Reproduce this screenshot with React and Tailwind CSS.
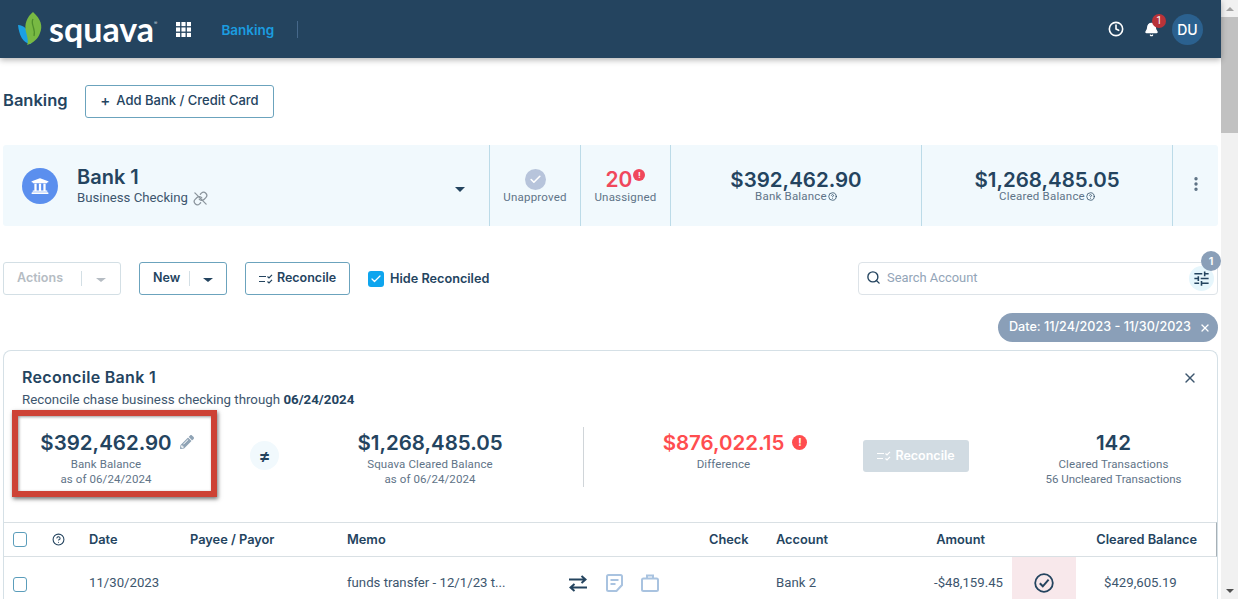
import React from "react";
import { Clock, Bell, EllipsisVertical, Search, X, CircleHelp, Check } from "lucide-react";
import { FaUniversity, FaPencilAlt } from "react-icons/fa";
import { MdTune } from "react-icons/md";

const Logo = () => (
  <svg width="26" height="34" viewBox="0 0 26 34" className="shrink-0">
    <path d="M0 13 C6 13 11 18 13 28 C14 31 13 32 12 32 C5 31 1 23 0 13Z" fill="#1ba0e2" />
    <path d="M15 0 C23 7 25 14 22 21 C20 27 15 31 9 33 C11 30 9 24 8 20 C6 12 9 5 15 0Z" fill="#78b943" />
    <path d="M15 7 C12 12 18 16 16 24" stroke="#4f8f2c" strokeWidth="1.3" fill="none" />
  </svg>
);

const GridIcon = () => (
  <svg width="15" height="15" viewBox="0 0 16 16" fill="#ffffff" className="shrink-0">
    <rect x="0" y="0" width="4.4" height="4.4" /><rect x="5.8" y="0" width="4.4" height="4.4" /><rect x="11.6" y="0" width="4.4" height="4.4" />
    <rect x="0" y="5.8" width="4.4" height="4.4" /><rect x="5.8" y="5.8" width="4.4" height="4.4" /><rect x="11.6" y="5.8" width="4.4" height="4.4" />
    <rect x="0" y="11.6" width="4.4" height="4.4" /><rect x="5.8" y="11.6" width="4.4" height="4.4" /><rect x="11.6" y="11.6" width="4.4" height="4.4" />
  </svg>
);

const ReconcileIcon = ({ color = "#24445f" }) => (
  <svg width="14" height="10" viewBox="0 0 14 10" fill="none" stroke={color} strokeWidth="1.2" className="shrink-0">
    <path d="M0 2.5H7M0 7.5H6" />
    <path d="M8.5 2.5L10 4L13 0.8M8.5 7.5L10 9L13 5.8" />
  </svg>
);

const BrokenLink = () => (
  <svg width="15" height="15" viewBox="0 0 24 24" fill="none" stroke="#8a949c" strokeWidth="2" strokeLinecap="round" className="mt-[2px] shrink-0">
    <path d="M10 13a5 5 0 0 0 7.54.54l3-3a5 5 0 0 0-7.07-7.07l-1.72 1.71" />
    <path d="M14 11a5 5 0 0 0-7.54-.54l-3 3a5 5 0 0 0 7.07 7.07l1.71-1.71" />
    <path d="M3 3l18 18" />
  </svg>
);

const TransferIcon = () => (
  <svg width="18" height="17" viewBox="0 0 18 17" fill="none" stroke="#24445f" strokeWidth="2" className="shrink-0">
    <path d="M0 4.5H16M12.5 1L16.5 4.5L12.5 8" />
    <path d="M18 12.5H2M5.5 9L1.5 12.5L5.5 16" />
  </svg>
);

const NoteIcon = () => (
  <svg width="17" height="18" viewBox="0 0 17 18" fill="none" stroke="#a9c3e0" strokeWidth="2" className="shrink-0">
    <path d="M2.5 1H14.5A1.5 1.5 0 0 1 16 2.5V11L10.5 17H2.5A1.5 1.5 0 0 1 1 15.5V2.5A1.5 1.5 0 0 1 2.5 1Z" />
    <path d="M4.5 6H12.5M4.5 10H9.5" />
  </svg>
);

const BagIcon = () => (
  <svg width="18" height="18" viewBox="0 0 18 18" fill="none" stroke="#a9c3e0" strokeWidth="2" className="shrink-0">
    <rect x="1" y="4.5" width="16" height="12.5" rx="1.5" />
    <path d="M6 4.5V1.5H12V4.5" />
  </svg>
);

const ClearedIcon = () => (
  <svg width="20" height="20" viewBox="0 0 20 20" fill="none" stroke="#24445f" strokeWidth="1.8" className="shrink-0">
    <circle cx="10" cy="10" r="8.8" />
    <path d="M5.8 10.3L8.8 13.3L14.6 6.6" strokeWidth="2" />
  </svg>
);

const CaretLg = () => <span className="inline-block h-0 w-0 border-x-[5px] border-t-[5px] border-x-transparent border-t-[#24445f]" />;
const CaretSm = ({ muted }) => (
  <span className={`inline-block h-0 w-0 border-x-[5px] border-t-[4px] border-x-transparent ${muted ? "border-t-[#b5bcc3]" : "border-t-[#24445f]"}`} />
);

const Box = () => <span className="block h-[15px] w-[14px] rounded-[3px] border border-[#5b9dbb] bg-white" />;

const StatCell = ({ className, children }) => (
  <div className={`flex h-full flex-col items-center justify-center border-l border-[#bcdbe8] pb-[3px] ${className}`}>{children}</div>
);

const sub = "font-['Roboto',sans-serif]";
const ui = "font-['Inter',sans-serif]";
const cardLabel = `text-[11.5px] leading-[9px] tracking-[0.2px] text-[#5f7488] ${sub}`;
const recLabel = `text-[11.5px] leading-[15px] tracking-[0.1px] text-[#5f7488] ${sub}`;
const recNum = "text-[20.5px] font-semibold leading-[28px]";

export default function App() {
  return (
    <div className={`flex h-[599px] w-[1238px] overflow-hidden bg-white text-[#24445f] ${ui}`}>
      <div className="flex w-[1221px] shrink-0 flex-col">
        {/* Top bar */}
        <header className="z-10 flex h-[58px] shrink-0 items-center bg-[#24445f] pl-[18px] pr-[18px] shadow-[0_2px_6px_rgba(0,0,0,0.3)]">
          <Logo />
          <span className="ml-[5px] font-['Lato',sans-serif] text-[34px] font-bold leading-none text-white">squava</span>
          <span className="mb-[12px] text-[5px] leading-none text-[#c9d3dc]">®</span>
          <span className="ml-[19px]"><GridIcon /></span>
          <span className="ml-[30px] pt-[2px] text-[13.5px] font-semibold text-[#1b9de0]">Banking</span>
          <span className="ml-[23px] h-[17px] w-px bg-[#46688a]" />
          <div className="ml-auto flex items-center">
            <Clock size={16} color="#ffffff" strokeWidth={2.4} />
            <div className="relative ml-[20px]">
              <Bell size={15} color="#ffffff" fill="#ffffff" />
              <span className={`absolute -right-[7px] -top-[8px] flex h-[14px] w-[14px] items-center justify-center rounded-full bg-[#b93339] text-[10px] text-white ${sub}`}>1</span>
            </div>
            <span className="ml-[13px] flex h-[31px] w-[31px] items-center justify-center rounded-full bg-[#2b618f] text-[14px] font-medium text-white">DU</span>
          </div>
        </header>

        <div className="flex min-h-0 flex-1 flex-col overflow-hidden pl-[3px] pr-[3px]">
          {/* Title row */}
          <div className="mt-[27px] flex h-[33px] shrink-0 items-center">
            <h1 className="w-[82px] pb-[3px] text-[16.5px] font-semibold">Banking</h1>
            <button className="flex h-[33px] w-[189px] items-center justify-center gap-[6px] rounded-[3px] border border-[#6ba3bd] bg-white pb-[2px] text-[13px] font-medium">
              <span className="text-[15px] leading-none">+</span> Add Bank / Credit Card
            </button>
          </div>

          {/* Bank card */}
          <section className="mt-[27px] flex h-[81px] shrink-0 items-stretch rounded-[3px] bg-[#f1f9fd]">
            <div className="flex w-[486px] items-center pl-[19px] pr-[24px]">
              <span className="flex h-9 w-9 items-center justify-center rounded-full bg-[#5b8fee]"><FaUniversity size={18} color="#ffffff" /></span>
              <div className="ml-[19px]">
                <div className="text-[20px] font-semibold leading-[24px]">Bank 1</div>
                <div className={`flex items-center gap-[5px] text-[13.2px] leading-[18px] text-[#3d566e] ${sub}`}>Business Checking <BrokenLink /></div>
              </div>
              <span className="ml-auto"><CaretLg /></span>
            </div>
            <StatCell className="w-[91px]">
              <span className="mb-[3px] mt-[2px] flex h-[21px] w-[21px] items-center justify-center rounded-full bg-[#b7c4db]"><Check size={13} color="#ffffff" strokeWidth={3} /></span>
              <span className={cardLabel}>Unapproved</span>
            </StatCell>
            <StatCell className="w-[90px]">
              <span className="flex items-start">
                <span className="text-[21px] font-semibold leading-[26px] text-[#f0485c]">20</span>
                <span className="ml-[1px] mt-[2px] flex h-[12px] w-[12px] items-center justify-center rounded-full bg-[#f0485c] text-[8px] font-bold text-white">!</span>
              </span>
              <span className={cardLabel}>Unassigned</span>
            </StatCell>
            <StatCell className="w-[251px]">
              <span className="text-[20.5px] font-semibold leading-[26px]">$392,462.90</span>
              <span className={`-mt-[1px] flex items-center gap-[1px] ${cardLabel}`}>Bank Balance <CircleHelp size={9} color="#24445f" /></span>
            </StatCell>
            <StatCell className="w-[251px]">
              <span className="text-[20.5px] font-semibold leading-[26px]">$1,268,485.05</span>
              <span className={`-mt-[1px] flex items-center gap-[1px] ${cardLabel}`}>Cleared Balance <CircleHelp size={9} color="#24445f" /></span>
            </StatCell>
            <StatCell className="flex-1"><EllipsisVertical size={18} color="#5a6f82" strokeWidth={2.5} /></StatCell>
          </section>

          {/* Toolbar */}
          <div className="mt-[36px] flex h-[33px] shrink-0 items-center">
            <div className="flex h-[33px] w-[118px] items-center rounded-[3px] border border-[#d3dfe5] pl-[13px] text-[12.5px] font-semibold text-[#b5bcc3]">
              Actions<span className="ml-[18px] h-[15px] w-px bg-[#d3dfe5]" /><span className="ml-[14px]"><CaretSm muted /></span>
            </div>
            <div className="ml-[18px] flex h-[33px] w-[88px] items-center rounded-[3px] border border-[#6ba3bd] pl-[13px] text-[12.5px] font-semibold">
              New<span className="ml-[9px] h-[15px] w-px bg-[#d3dfe5]" /><span className="ml-[13px]"><CaretSm /></span>
            </div>
            <div className="ml-[18px] flex h-[33px] w-[105px] items-center justify-center gap-[4px] rounded-[3px] border border-[#6ba3bd] text-[12.5px] font-semibold"><ReconcileIcon />Reconcile</div>
            <span className="ml-[18px] flex h-4 w-4 items-center justify-center rounded-[3px] bg-[#0ea5ee]"><Check size={12} color="#ffffff" strokeWidth={2.5} /></span>
            <span className="ml-[6px] text-[12.7px] font-semibold">Hide Reconciled</span>
            <div className="relative ml-auto flex h-[33px] w-[360px] items-center rounded-[4px] border border-[#dde3e8] pb-[2px] pl-[7px] pr-[3px]">
              <Search size={15} color="#24445f" strokeWidth={2.2} />
              <span className={`ml-[6px] text-[12.9px] text-[#93a5b8] ${sub}`}>Search Account</span>
              <span className="ml-auto mt-[2px] flex h-[25px] w-[25px] items-center justify-center rounded-full bg-[#e6f6fc]"><MdTune size={19} color="#24445f" /></span>
              <span className="absolute -right-[4px] -top-[12px] flex h-5 w-5 items-center justify-center rounded-full bg-[#8a9fb8] text-[11px] font-semibold text-white">1</span>
            </div>
          </div>

          {/* Filter chip */}
          <div className="mt-[18px] flex shrink-0 justify-end">
            <span className="flex h-[29px] items-center gap-[8px] rounded-full bg-[#8a9fb8] pl-[11px] pr-[7px] text-[12.6px] font-medium text-white">Date: 11/24/2023 - 11/30/2023 <X size={12} color="#ffffff" strokeWidth={2.5} /></span>
          </div>

          {/* Reconcile card */}
          <section className="mt-[8px] flex min-h-0 flex-1 flex-col overflow-hidden rounded-t-[8px] border border-b-0 border-[#d5e0e6]">
            <div className="flex shrink-0 items-start justify-between pl-[18px] pr-[19px] pt-[16px]">
              <div>
                <h2 className="text-[16px] font-semibold leading-[20px] tracking-[0.3px]">Reconcile Bank 1</h2>
                <p className={`mt-[3px] text-[13.3px] leading-[20px] text-[#3d566e] ${sub}`}>Reconcile chase business checking through <b className="text-[#24445f]">06/24/2024</b></p>
              </div>
              <X size={16} color="#3d566e" className="mt-[3px]" />
            </div>

            <div className="flex h-[112px] shrink-0 items-center pb-[16px]">
              <div className="flex w-[204px] flex-col items-center">
                <div className="relative">
                  <span className={recNum}>$392,462.90</span>
                  <span className="absolute -right-[22px] top-[6px]"><FaPencilAlt size={14} color="#8fa3b5" /></span>
                </div>
                <span className={recLabel}>Bank Balance</span>
                <span className={recLabel}>as of 06/24/2024</span>
              </div>
              <span className="mb-[6px] ml-[42px] flex h-[29px] w-[29px] items-center justify-center rounded-full bg-[#f1f9fd] text-[18px] font-semibold">≠</span>
              <div className="ml-[50px] flex w-[202px] flex-col items-center">
                <span className={recNum}>$1,268,485.05</span>
                <span className={recLabel}>Squava Cleared Balance</span>
                <span className={recLabel}>as of 06/24/2024</span>
              </div>
              <span className="mb-[2px] ml-[52px] h-[60px] w-px bg-[#d0d5d9]" />
              <div className="flex w-[279px] flex-col items-center self-center pb-[15px]">
                <div className="relative">
                  <span className={`${recNum} text-[#ff4d4f]`}>$876,022.15</span>
                  <span className="absolute -right-[23px] top-[6px] flex h-[15px] w-[15px] items-center justify-center rounded-full bg-[#ff4d4f] text-[10px] font-bold text-white">!</span>
                </div>
                <span className={recLabel}>Difference</span>
              </div>
              <div className="mb-[4px] flex h-[32px] w-[106px] items-center justify-center gap-[4px] rounded-[3px] bg-[#d1dbe2] text-[12.5px] font-semibold text-white"><ReconcileIcon color="#ffffff" />Reconcile</div>
              <div className="ml-[53px] flex w-[183px] flex-col items-center">
                <span className={recNum}>142</span>
                <span className={recLabel}>Cleared Transactions</span>
                <span className={`text-[11.5px] leading-[15px] text-[#5f7488] ${sub}`}>56 Uncleared Transactions</span>
              </div>
            </div>

            {/* Table */}
            <div className="grid h-[35px] shrink-0 grid-cols-[48px_37px_101px_157px_222px_140px_67px_84px_152px_64px_1fr] items-center border-y border-r border-[#d9e0e4] border-r-[#a7b0b6] text-[12.8px] font-semibold">
              <span className="pl-[9px]"><Box /></span>
              <span><CircleHelp size={13} color="#24445f" /></span>
              <span>Date</span>
              <span>Payee / Payor</span>
              <span>Memo</span>
              <span />
              <span>Check</span>
              <span>Account</span>
              <span className="pr-[27px] text-right">Amount</span>
              <span />
              <span className="pr-[19px] text-right">Cleared Balance</span>
            </div>
            <div className={`grid h-[52px] shrink-0 grid-cols-[48px_37px_101px_157px_222px_140px_67px_84px_152px_64px_1fr] items-center text-[13.2px] text-[#3d566e] ${sub}`}>
              <span className="mt-[3px] pl-[9px]"><Box /></span>
              <span />
              <span>11/30/2023</span>
              <span />
              <span>funds transfer - 12/1/23 t...</span>
              <span className="flex items-center">
                <TransferIcon />
                <span className="ml-[19px]"><NoteIcon /></span>
                <span className="ml-[18px]"><BagIcon /></span>
              </span>
              <span />
              <span>Bank 2</span>
              <span className="pr-[9px] text-right">-$48,159.45</span>
              <span className="flex h-full items-center justify-center bg-[#f8e8eb]"><ClearedIcon /></span>
              <span className="pl-[28px]">$429,605.19</span>
            </div>
          </section>
        </div>
      </div>

      {/* Page scrollbar */}
      <div className="flex h-full w-[17px] shrink-0 flex-col bg-[#f1f1f1]">
        <div className="flex h-[17px] items-center justify-center"><span className="h-0 w-0 border-x-[4px] border-b-[4px] border-x-transparent border-b-[#a3a3a3]" /></div>
        <div className="h-[116px] bg-[#c1c1c1]" />
        <div className="mt-auto flex h-[17px] items-center justify-center"><span className="h-0 w-0 border-x-[4px] border-t-[4px] border-x-transparent border-t-[#505050]" /></div>
      </div>

      {/* Annotation frame drawn over the screenshot */}
      <div className="absolute left-[12px] top-[410px] h-[87px] w-[205px] border-[6px] border-[#cd4235] shadow-[1px_2px_4px_rgba(0,0,0,0.55),inset_1px_1px_3px_rgba(0,0,0,0.4)]" />
    </div>
  );
}
